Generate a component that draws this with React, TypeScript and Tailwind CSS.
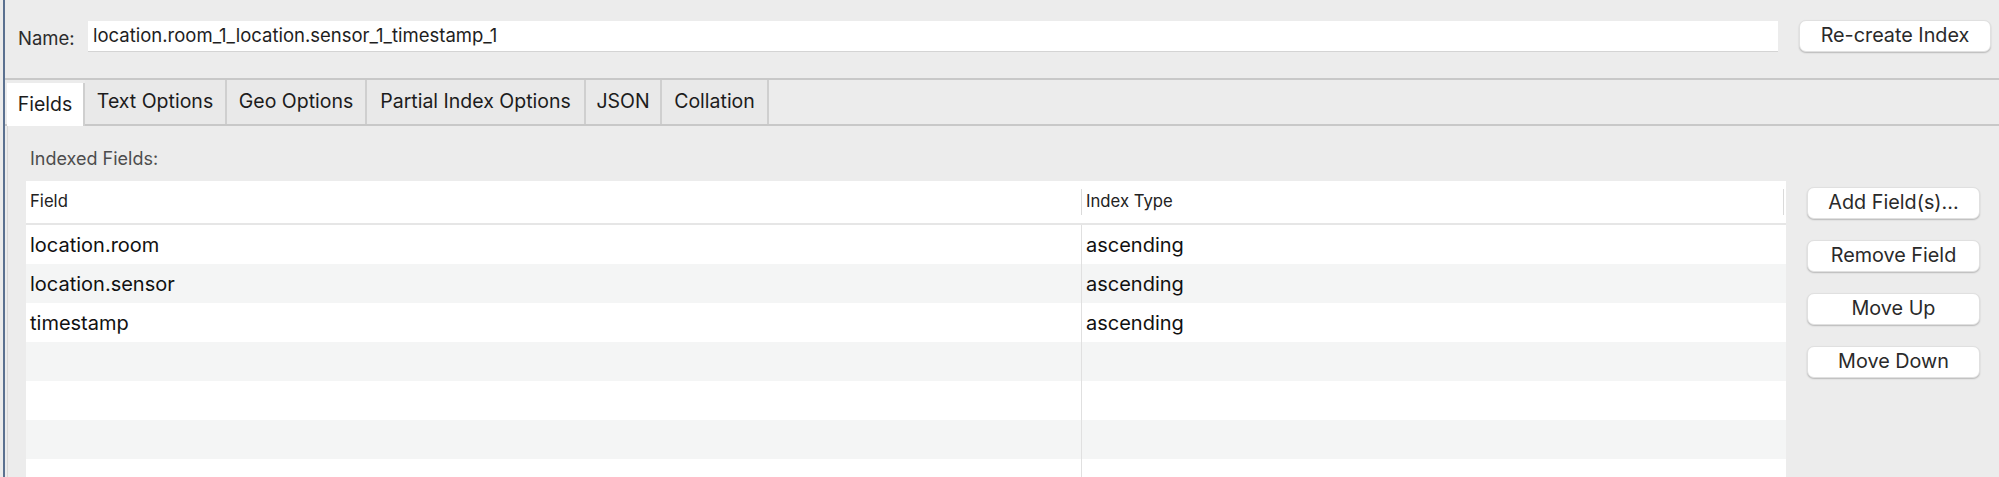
import React from 'react'

const tabs = [
  { label: 'Fields', w: 'w-[78px]', active: true },
  { label: 'Text Options', w: 'w-[142px]' },
  { label: 'Geo Options', w: 'w-[140px]' },
  { label: 'Partial Index Options', w: 'w-[219px]' },
  { label: 'JSON', w: 'w-[76px]' },
  { label: 'Collation', w: 'w-[107px]' },
]

const rows = [
  { field: 'location.room', type: 'ascending' },
  { field: 'location.sensor', type: 'ascending' },
  { field: 'timestamp', type: 'ascending' },
  { field: '', type: '' },
  { field: '', type: '' },
  { field: '', type: '' },
  { field: '', type: '' },
]

function MacButton({ children, className = '' }: { children: React.ReactNode; className?: string }) {
  return (
    <button
      className={`bg-white rounded-[7px] border border-[#e0e0e0] shadow-[0_1px_1.5px_rgba(0,0,0,0.22)] text-[#2a2a2a] text-[19.8px] leading-none flex items-center justify-center ${className}`}
    >
      {children}
    </button>
  )
}

export default function App() {
  return (
    <div
      className="h-[477px] w-[1999px] overflow-hidden bg-[#ececec] pl-[3px]"
      style={{ fontFamily: 'Inter, "Noto Sans", sans-serif' }}
    >
      <div className="h-full border-l-2 border-[#5b7190] flex flex-col">
        {/* name row */}
        <div className="h-[78px] shrink-0 flex items-start pt-[20px] pl-[13px] pr-[8px]">
          <span className="text-[18.5px] text-[#2b2b2b] mt-[5px] w-[70px]">Name:</span>
          <div className="mt-[1px] h-[31px] w-[1690px] bg-white border-b border-[#d4d4d4] flex items-center pl-[5px] text-[18.5px] text-[#1e1e1e]">
            location.room_1_location.sensor_1_timestamp_1
          </div>
          <MacButton className="ml-[21px] h-[32px] w-[192px]">Re-create Index</MacButton>
        </div>

        {/* tabs */}
        <div className="h-[48px] shrink-0 border-t-2 border-b-2 border-[#c8c8c8] flex pl-[2px]">
          {tabs.map(t => (
            <div
              key={t.label}
              className={`${t.w} flex items-center justify-center border-r-2 border-[#cfcfcf] text-[19.5px] text-[#1c1c1c] ${
                t.active ? 'bg-white mt-[3px] -mb-[2px]' : 'bg-[#e9e9e9]'
              }`}
            >
              {t.label}
            </div>
          ))}
        </div>

        {/* content */}
        <div className="flex-1 min-h-0 overflow-hidden ml-[2px] border-l border-[#d8d8d8] flex flex-col">
          <div className="h-[55px] shrink-0 pl-[22px] pt-[24px] text-[18px] leading-none text-[#4d4d4d]">Indexed Fields:</div>
          <div className="flex flex-1 min-h-0">
            <div className="ml-[18px] w-[1760px] bg-white flex flex-col">
              <div className="h-[44px] shrink-0 flex border-b-2 border-[#e6e6e6] text-[16.7px] text-[#222]">
                <div className="w-[1055px] flex items-center pl-[4px]">Field</div>
                <div className="flex-1 flex items-center">
                  <div className="h-[26px] border-l border-[#dadada]" />
                  <span className="pl-[4px] flex-1">Index Type</span>
                  <div className="h-[26px] border-l border-[#dadada] mr-[2px]" />
                </div>
              </div>
              {rows.map((r, i) => (
                <div
                  key={i}
                  className={`h-[39px] shrink-0 flex text-[20px] text-[#111] ${i % 2 === 1 ? 'bg-[#f4f5f5]' : 'bg-white'}`}
                >
                  <div className="w-[1055px] flex items-center pl-[4px]">{r.field}</div>
                  <div className="flex-1 flex items-center pl-[4px] border-l border-[#e0e0e0]">{r.type}</div>
                </div>
              ))}
            </div>
            <div className="ml-[21px] pt-[6px] flex flex-col gap-[21px]">
              <MacButton className="h-[32px] w-[173px]">Add Field(s)...</MacButton>
              <MacButton className="h-[32px] w-[173px]">Remove Field</MacButton>
              <MacButton className="h-[32px] w-[173px]">Move Up</MacButton>
              <MacButton className="h-[32px] w-[173px]">Move Down</MacButton>
            </div>
          </div>
        </div>
      </div>
    </div>
  )
}
